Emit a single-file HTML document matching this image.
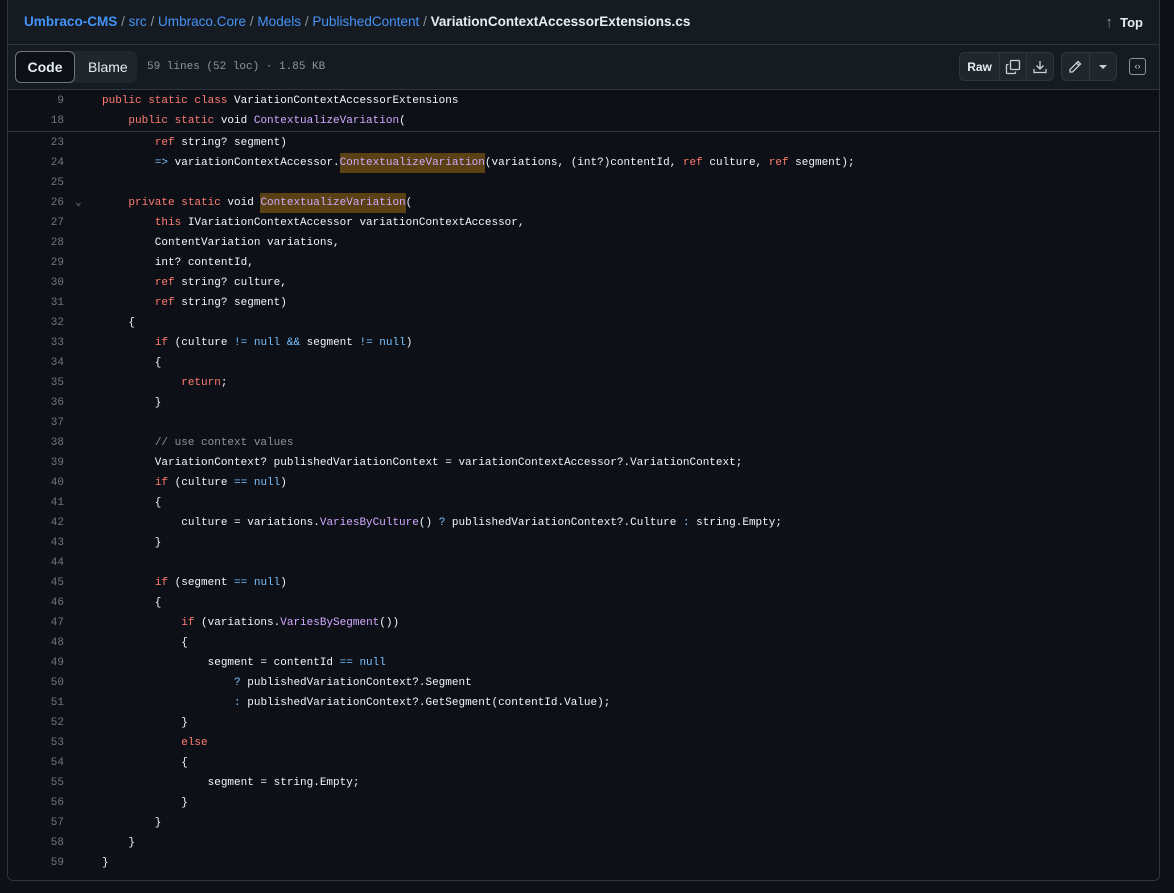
<!DOCTYPE html>
<html><head><meta charset="utf-8"><style>
*{box-sizing:border-box;margin:0;padding:0}
body{width:1174px;height:893px;background:#0d1117;overflow:hidden;font-family:"Liberation Sans",sans-serif;color:#e6edf3;position:relative}
.box{position:absolute;left:7px;top:-10px;width:1153px;height:891px;border:1px solid #30363d;border-radius:6px;overflow:hidden}
.hdr{position:absolute;left:0;top:0;width:100%;height:54px;background:#161b22;border-bottom:1px solid #30363d}
.bc{position:absolute;left:16px;top:23px;font-size:13.55px;color:#8b949e}
.bc a{color:#4493f8;text-decoration:none}
.bc b{color:#e6edf3}
.top{position:absolute;right:16px;top:23px;font-size:13px;font-weight:bold;color:#e6edf3}
.tb{position:absolute;left:0;top:54px;width:100%;height:45px;background:#161b22;border-bottom:1px solid #30363d}
.seg{position:absolute;left:7px;top:6px;height:32px;width:122px;background:#21262d;border-radius:6px}
.seg .c{position:absolute;left:0;top:0;width:60px;height:32px;border:1px solid #6e7681;border-radius:6px;background:#0d1117;font-size:14px;font-weight:bold;text-align:center;line-height:30px}
.seg .bl{position:absolute;left:73px;top:0;line-height:32px;font-size:14px}
.meta{position:absolute;left:139px;top:16px;font-family:"Liberation Mono",monospace;font-size:11px;color:#8b949e}
.grp{position:absolute;top:7px;height:29px;border:1px solid #30363d;border-radius:6px;background:#21262d;display:flex}
.grp div{border-right:1px solid #30363d;display:flex;align-items:center;justify-content:center}
.grp div:last-child{border-right:0}
.code{position:absolute;left:0;top:99px;width:100%;font-family:"Liberation Mono",monospace;font-size:11px;color:#f0f6fc}
.sticky{height:42px;border-bottom:1px solid #30363d;padding-top:1px}
.l{height:20px;line-height:20px;white-space:pre;position:relative}
.n{position:absolute;left:0;width:56px;text-align:right;color:#6e7681}
.t{position:absolute;left:94px}
.k{color:#ff7b72}.f{color:#d2a8ff}.b{color:#79c0ff}.cm{color:#8b949e}
.h{background:#5a4114;display:inline-block;height:20px}
</style></head><body>
<div class="box">
<div class="hdr">
<div class="bc"><a href="#"><b style="color:#4493f8">Umbraco-CMS</b></a> / <a href="#">src</a> / <a href="#">Umbraco.Core</a> / <a href="#">Models</a> / <a href="#">PublishedContent</a> / <b>VariationContextAccessorExtensions.cs</b></div>
<div class="top"><span style="color:#8b949e;font-weight:normal;font-size:15px">&#8593;</span>&nbsp; Top</div>
</div>
<div class="tb">
<div class="seg"><div class="c">Code</div><div class="bl">Blame</div></div>
<div class="meta">59 lines (52 loc) · 1.85 KB</div>
<div class="grp" style="left:951px;width:95px"><div style="width:41px;font-size:12px;font-weight:bold">Raw</div><div style="width:27px"><svg width="16" height="16" viewBox="0 0 16 16" fill="none" stroke="#c9d1d9" stroke-width="1.3"><rect x="5.5" y="1.5" width="9" height="9" rx="1"/><path d="M3.5 5.5h-1a1 1 0 0 0-1 1v7a1 1 0 0 0 1 1h7a1 1 0 0 0 1-1v-1"/></svg></div><div style="width:27px"><svg width="16" height="16" viewBox="0 0 16 16" fill="none" stroke="#c9d1d9" stroke-width="1.3"><path d="M8 2v8M4.5 6.5 8 10l3.5-3.5M2 10v3.5h12V10"/></svg></div></div>
<div class="grp" style="left:1053px;width:56px"><div style="width:28px"><svg width="16" height="16" viewBox="0 0 16 16" fill="none" stroke="#c9d1d9" stroke-width="1.3"><path d="M11 2.5l2.5 2.5-8 8H3v-2.5z M9.5 4l2.5 2.5"/></svg></div><div style="width:27px"><svg width="10" height="6" viewBox="0 0 10 6"><path d="M1 1h8L5 5z" fill="#c9d1d9"/></svg></div></div>
<div style="position:absolute;left:1121px;top:13px;width:17px;height:17px;border:1px solid #8b949e;border-radius:3px;font-size:9px;color:#c9d1d9;text-align:center;line-height:14px">&lsaquo;&rsaquo;</div>
</div>
<div class="code">
<div class="sticky">
<div class="l"><span class="n">9</span><span class="t"><span class="k">public static class</span> VariationContextAccessorExtensions</span></div>
<div class="l"><span class="n">18</span><span class="t">    <span class="k">public static</span> void <span class="f">ContextualizeVariation</span>(</span></div>
</div>
<div style="height:1px"></div>
<div class="l"><span class="n">23</span><span class="t">        <span class="k">ref</span> string? segment)</span></div>
<div class="l"><span class="n">24</span><span class="t">        <span class="b">=&gt;</span> variationContextAccessor.<span class="f h">ContextualizeVariation</span>(variations, (int?)contentId, <span class="k">ref</span> culture, <span class="k">ref</span> segment);</span></div>
<div class="l"><span class="n">25</span></div>
<div class="l"><span class="n">26</span><span style="position:absolute;left:67px;color:#6e7681">&#8964;</span><span class="t">    <span class="k">private static</span> void <span class="f h">ContextualizeVariation</span>(</span></div>
<div class="l"><span class="n">27</span><span class="t">        <span class="k">this</span> IVariationContextAccessor variationContextAccessor,</span></div>
<div class="l"><span class="n">28</span><span class="t">        ContentVariation variations,</span></div>
<div class="l"><span class="n">29</span><span class="t">        int? contentId,</span></div>
<div class="l"><span class="n">30</span><span class="t">        <span class="k">ref</span> string? culture,</span></div>
<div class="l"><span class="n">31</span><span class="t">        <span class="k">ref</span> string? segment)</span></div>
<div class="l"><span class="n">32</span><span class="t">    {</span></div>
<div class="l"><span class="n">33</span><span class="t">        <span class="k">if</span> (culture <span class="b">!=</span> <span class="b">null</span> <span class="b">&amp;&amp;</span> segment <span class="b">!=</span> <span class="b">null</span>)</span></div>
<div class="l"><span class="n">34</span><span class="t">        {</span></div>
<div class="l"><span class="n">35</span><span class="t">            <span class="k">return</span>;</span></div>
<div class="l"><span class="n">36</span><span class="t">        }</span></div>
<div class="l"><span class="n">37</span></div>
<div class="l"><span class="n">38</span><span class="t">        <span class="cm">// use context values</span></span></div>
<div class="l"><span class="n">39</span><span class="t">        VariationContext? publishedVariationContext = variationContextAccessor?.VariationContext;</span></div>
<div class="l"><span class="n">40</span><span class="t">        <span class="k">if</span> (culture <span class="b">==</span> <span class="b">null</span>)</span></div>
<div class="l"><span class="n">41</span><span class="t">        {</span></div>
<div class="l"><span class="n">42</span><span class="t">            culture = variations.<span class="f">VariesByCulture</span>() <span class="b">?</span> publishedVariationContext?.Culture <span class="b">:</span> string.Empty;</span></div>
<div class="l"><span class="n">43</span><span class="t">        }</span></div>
<div class="l"><span class="n">44</span></div>
<div class="l"><span class="n">45</span><span class="t">        <span class="k">if</span> (segment <span class="b">==</span> <span class="b">null</span>)</span></div>
<div class="l"><span class="n">46</span><span class="t">        {</span></div>
<div class="l"><span class="n">47</span><span class="t">            <span class="k">if</span> (variations.<span class="f">VariesBySegment</span>())</span></div>
<div class="l"><span class="n">48</span><span class="t">            {</span></div>
<div class="l"><span class="n">49</span><span class="t">                segment = contentId <span class="b">==</span> <span class="b">null</span></span></div>
<div class="l"><span class="n">50</span><span class="t">                    <span class="b">?</span> publishedVariationContext?.Segment</span></div>
<div class="l"><span class="n">51</span><span class="t">                    <span class="b">:</span> publishedVariationContext?.GetSegment(contentId.Value);</span></div>
<div class="l"><span class="n">52</span><span class="t">            }</span></div>
<div class="l"><span class="n">53</span><span class="t">            <span class="k">else</span></span></div>
<div class="l"><span class="n">54</span><span class="t">            {</span></div>
<div class="l"><span class="n">55</span><span class="t">                segment = string.Empty;</span></div>
<div class="l"><span class="n">56</span><span class="t">            }</span></div>
<div class="l"><span class="n">57</span><span class="t">        }</span></div>
<div class="l"><span class="n">58</span><span class="t">    }</span></div>
<div class="l"><span class="n">59</span><span class="t">}</span></div>
</div>
</div>
</body></html>
